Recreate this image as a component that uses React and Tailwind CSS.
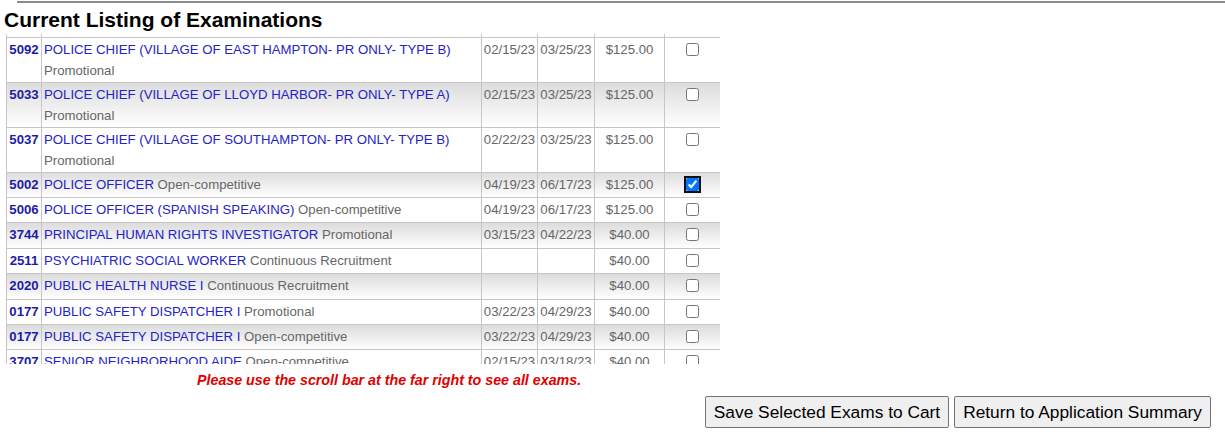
import React from "react";

const exams = [
  { code: "5092", title: "POLICE CHIEF (VILLAGE OF EAST HAMPTON- PR ONLY- TYPE B)", kind: "Promotional", from: "02/15/23", to: "03/25/23", fee: "$125.00" },
  { code: "5033", title: "POLICE CHIEF (VILLAGE OF LLOYD HARBOR- PR ONLY- TYPE A)", kind: "Promotional", from: "02/15/23", to: "03/25/23", fee: "$125.00" },
  { code: "5037", title: "POLICE CHIEF (VILLAGE OF SOUTHAMPTON- PR ONLY- TYPE B)", kind: "Promotional", from: "02/22/23", to: "03/25/23", fee: "$125.00" },
  { code: "5002", title: "POLICE OFFICER", kind: "Open-competitive", from: "04/19/23", to: "06/17/23", fee: "$125.00", checked: true },
  { code: "5006", title: "POLICE OFFICER (SPANISH SPEAKING)", kind: "Open-competitive", from: "04/19/23", to: "06/17/23", fee: "$125.00" },
  { code: "3744", title: "PRINCIPAL HUMAN RIGHTS INVESTIGATOR", kind: "Promotional", from: "03/15/23", to: "04/22/23", fee: "$40.00" },
  { code: "2511", title: "PSYCHIATRIC SOCIAL WORKER", kind: "Continuous Recruitment", from: "", to: "", fee: "$40.00" },
  { code: "2020", title: "PUBLIC HEALTH NURSE I", kind: "Continuous Recruitment", from: "", to: "", fee: "$40.00" },
  { code: "0177", title: "PUBLIC SAFETY DISPATCHER I", kind: "Promotional", from: "03/22/23", to: "04/29/23", fee: "$40.00" },
  { code: "0177", title: "PUBLIC SAFETY DISPATCHER I", kind: "Open-competitive", from: "03/22/23", to: "04/29/23", fee: "$40.00" },
  { code: "3707", title: "SENIOR NEIGHBORHOOD AIDE", kind: "Open-competitive", from: "02/15/23", to: "03/18/23", fee: "$40.00" },
];

const cell = "border border-[#c6c6c6] align-top py-[1px]";

const ExamRow = ({ exam, shaded }) => {
  const [checked, setChecked] = React.useState(!!exam.checked);
  return (
    <tr className={`h-[25.43px] ${shaded ? "bg-linear-to-b from-[#dcdcdc] to-white" : "bg-white"}`}>
      <td className={`${cell} text-center font-bold text-[#1c1ca8]`}>{exam.code}</td>
      <td className={`${cell} px-[2px]`}>
        <span className="text-[#2323c8]">{exam.title}</span>{" "}
        <span className="text-[#666]">{exam.kind}</span>
      </td>
      <td className={`${cell} text-center text-[#666] whitespace-nowrap`}>{exam.from}</td>
      <td className={`${cell} text-center text-[#666] whitespace-nowrap`}>{exam.to}</td>
      <td className={`${cell} text-center text-[#666]`}>{exam.fee}</td>
      <td className={`${cell} text-center`}>
        <input
          type="checkbox"
          checked={checked}
          onChange={(e) => setChecked(e.target.checked)}
          className={`m-[3px] w-[13px] h-[13px] align-[-2px] ${
            checked ? "outline-2 outline-[#101010] outline-offset-0 rounded-[2px]" : ""
          }`}
        />
      </td>
    </tr>
  );
};

export default function App() {
  return (
    <div className="w-[1225px] h-[442px] bg-white font-['Liberation_Sans',Arial,sans-serif] overflow-hidden">
      <div className="ml-[17px] h-[2px] bg-[#8c8c8c] mt-[1px]" />

      <h2 className="mt-[5px] pl-[4px] text-[21px] leading-[23px] font-bold text-black">
        Current Listing of Examinations
      </h2>

      <div className="ml-[6px] mt-[3px] w-[714px] h-[330px] overflow-hidden">
        <table className="w-[714px] table-fixed border-collapse text-[13.2px] leading-[21px]">
          <colgroup>
            <col className="w-[35px]" />
            <col className="w-[440px]" />
            <col className="w-[56px]" />
            <col className="w-[57px]" />
            <col className="w-[70px]" />
            <col className="w-[56px]" />
          </colgroup>
          <tbody>
            <tr className="h-[3px]">
              {[0, 1, 2, 3, 4, 5].map((i) => (
                <td key={i} className="border-x border-b border-[#c6c6c6] p-0 h-[3px]" />
              ))}
            </tr>
            {exams.map((exam, i) => (
              <ExamRow key={i} exam={exam} shaded={i % 2 === 1} />
            ))}
          </tbody>
        </table>
      </div>

      <p className="mt-[9px] pl-[197px] text-[14.25px] leading-[15px] font-bold italic text-[#e00000]">
        Please use the scroll bar at the far right to see all exams.
      </p>

      <div className="mt-[8px] pr-[14px] flex justify-end gap-[5px]">
        <button className="h-[32px] px-[8px] text-[17.33px] leading-[20px] text-black bg-[#efefef] border border-[#767676] rounded-[2px]">
          Save Selected Exams to Cart
        </button>
        <button className="h-[32px] px-[8px] text-[17.33px] leading-[20px] text-black bg-[#efefef] border border-[#767676] rounded-[2px]">
          Return to Application Summary
        </button>
      </div>
    </div>
  );
}
